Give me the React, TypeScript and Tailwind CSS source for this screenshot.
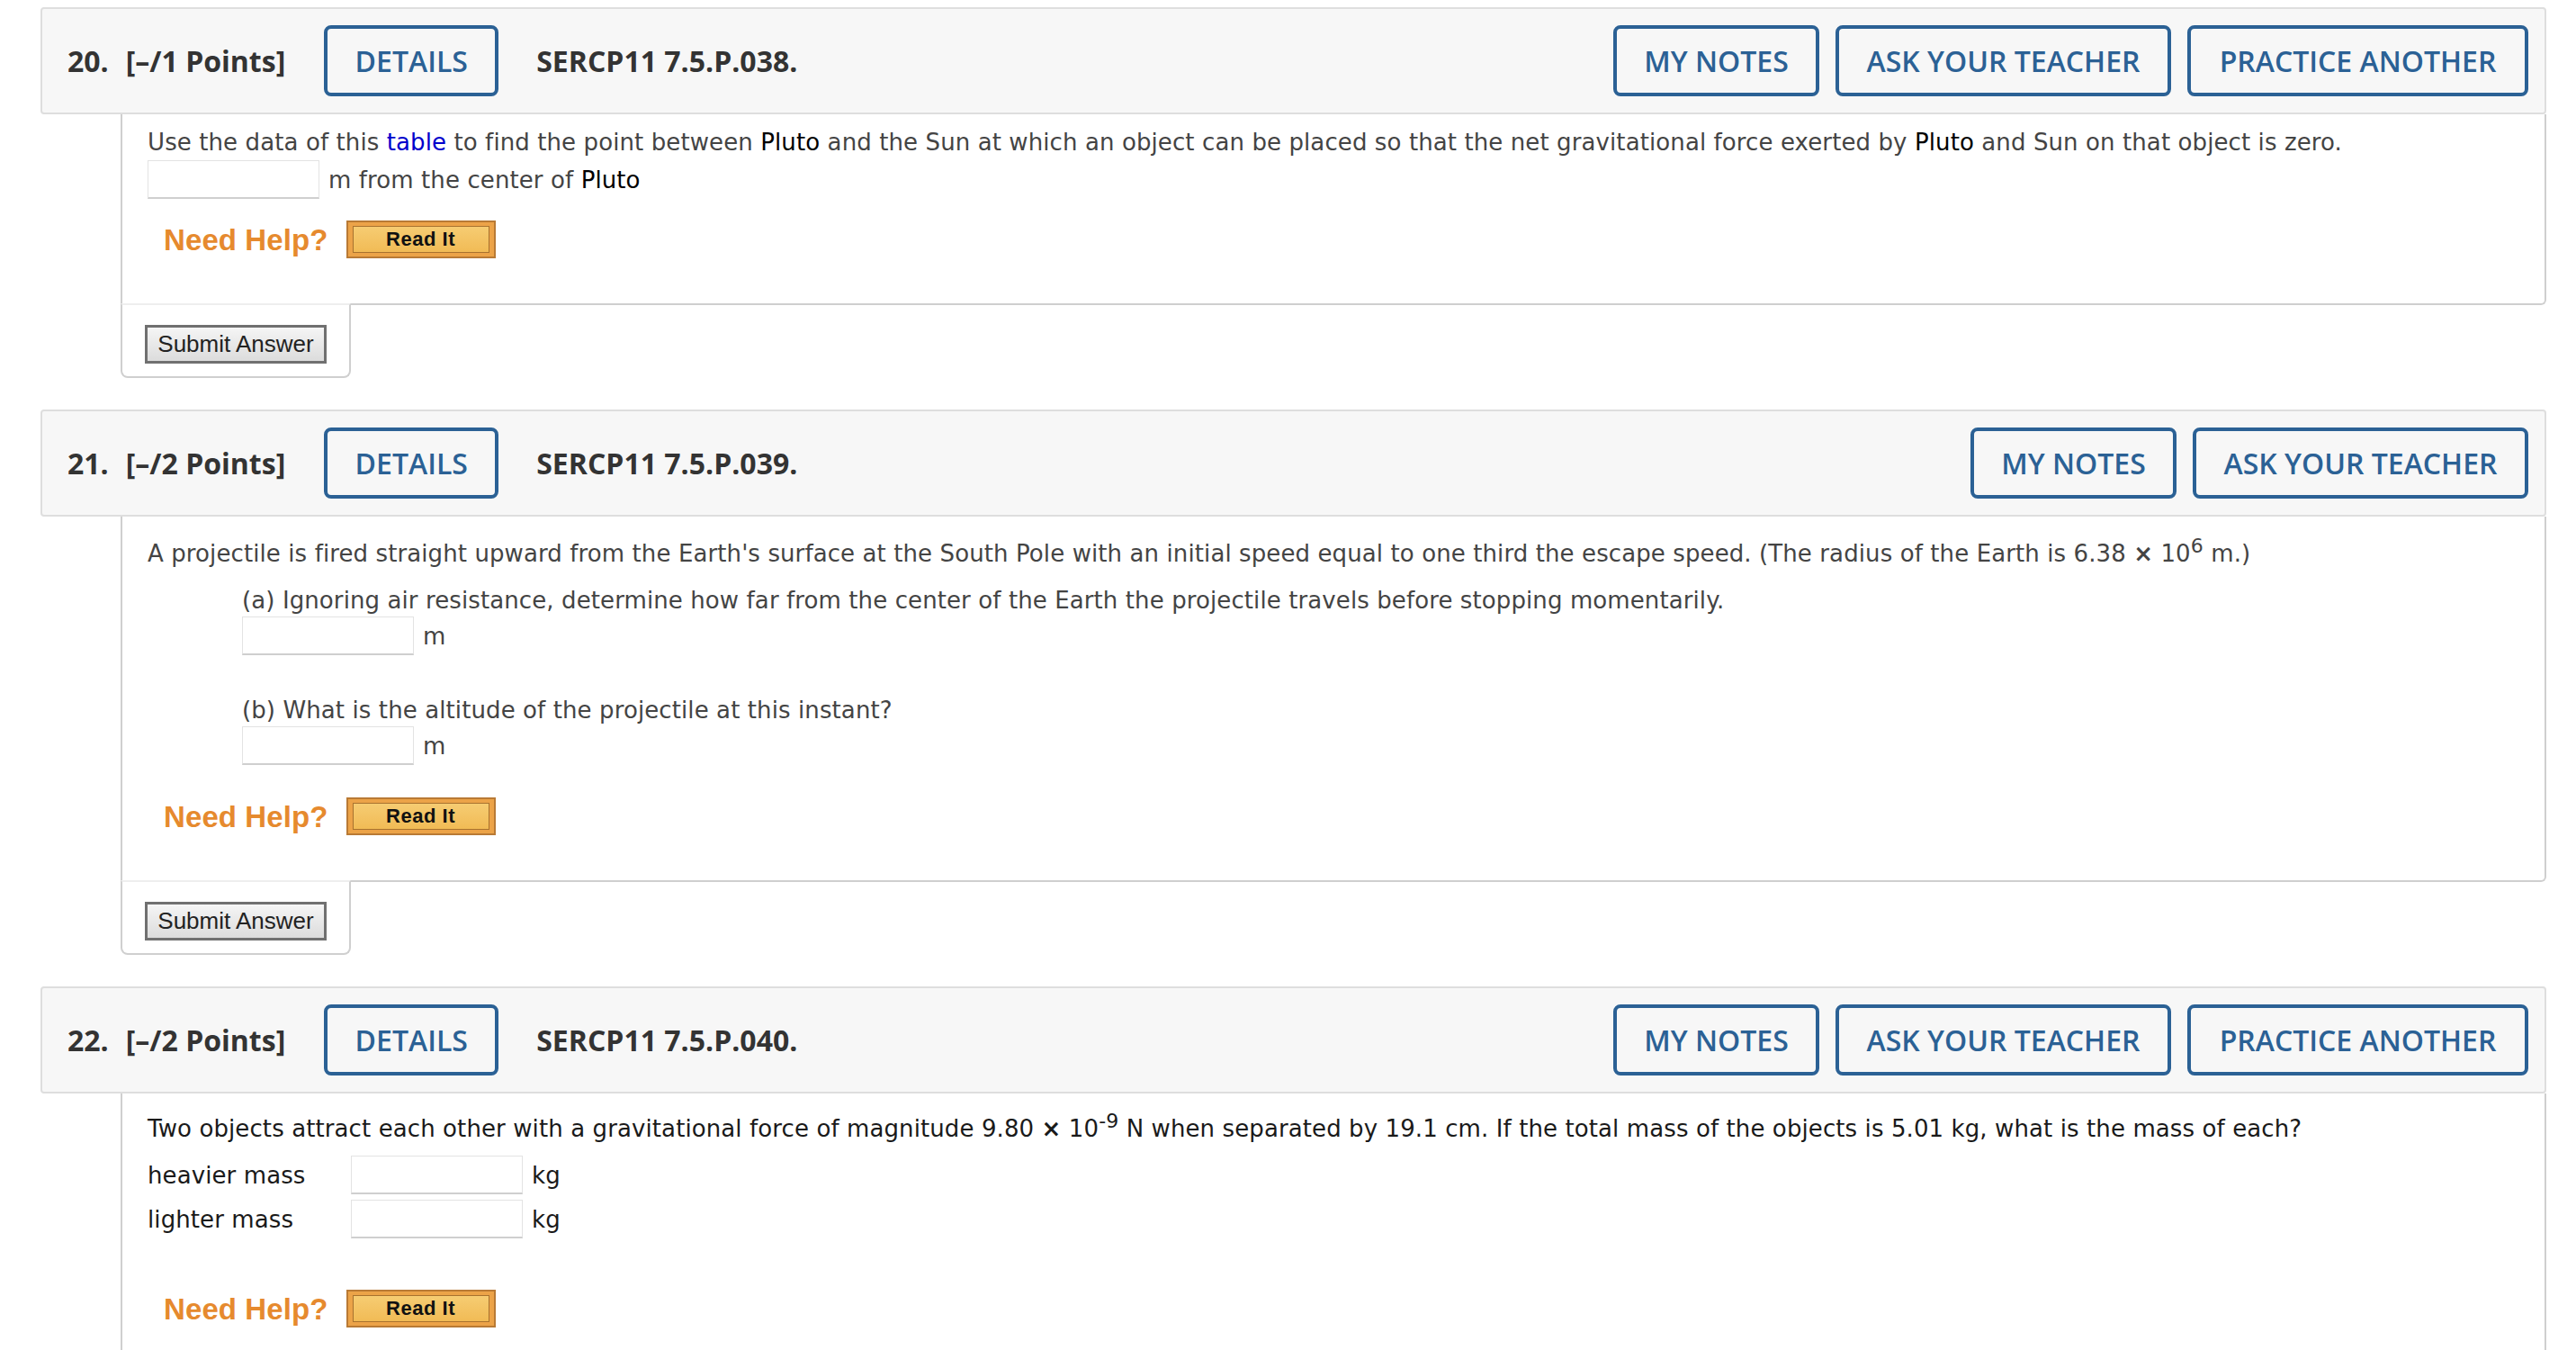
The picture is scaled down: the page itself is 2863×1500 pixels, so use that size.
import React from "react";

type HeaderProps = {
  num: string;
  points: string;
  code: string;
  practice?: boolean;
};

function OutlineButton({ label, width }: { label: string; width: string }) {
  return (
    <div
      className={`${width} h-[79px] flex items-center justify-center border-[4px] border-[#2b6195] rounded-[8px] text-[#2b6195] text-[32px] font-semibold`}
    >
      {label}
    </div>
  );
}

function QuestionHeader({ num, points, code, practice = true }: HeaderProps) {
  return (
    <div className="h-[119px] flex items-center bg-[#f7f7f7] border-2 border-[#dedede] rounded-[4px] pl-[28px] pr-[18px] font-['Open_Sans',sans-serif] text-[#333333]">
      <span className="text-[32px] font-bold">{num}</span>
      <span className="ml-[19px] text-[32px] font-bold">{points}</span>
      <div className="ml-[43px]">
        <OutlineButton label="DETAILS" width="w-[194px]" />
      </div>
      <span className="ml-[42px] text-[32px] font-bold">{code}</span>
      <div className="ml-auto flex items-center gap-[18px]">
        <OutlineButton label="MY NOTES" width="w-[229px]" />
        <OutlineButton label="ASK YOUR TEACHER" width="w-[373px]" />
        {practice && <OutlineButton label="PRACTICE ANOTHER" width="w-[379px]" />}
      </div>
    </div>
  );
}

function AnswerInput() {
  return (
    <div className="w-[191px] h-[43px] bg-white border border-[#e3e3e3] border-b-2 border-b-[#cfcfcf]" />
  );
}

function NeedHelp({ mt }: { mt: string }) {
  return (
    <div className={`${mt} flex items-center pl-[18px]`}>
      <span className="text-[33px] font-bold text-[#e68a2e] font-['Liberation_Sans',Arial,sans-serif] leading-none">
        Need Help?
      </span>
      <div className="ml-[20px] w-[166px] h-[42px] border-2 border-[#b97a35] bg-[#eca348] px-[5px] py-[4px]">
        <div className="h-full flex items-center justify-center border border-[#a8722f] bg-gradient-to-b from-[#f6cc72] to-[#f1bb55] text-[22px] font-bold text-[#111111] font-['Liberation_Sans',Arial,sans-serif] tracking-[0.5px]">
          Read It
        </div>
      </div>
    </div>
  );
}

function SubmitBox() {
  return (
    <div className="ml-[89px] -mt-[2px] w-[256px] border-2 border-[#cfcfcf] border-t-[#eeeeee] rounded-b-[8px] pt-[22px] pb-[14px] pl-[25px]">
      <div className="w-[202px] h-[43px] flex items-center justify-center border-[3px] border-[#707070] bg-gradient-to-b from-[#f5f5f5] to-[#dcdcdc] text-[26px] text-[#222222] font-['Liberation_Sans',Arial,sans-serif]">
        Submit Answer
      </div>
    </div>
  );
}

function Body({ pt, children }: { pt: string; children: React.ReactNode }) {
  return (
    <div
      className={`ml-[89px] border-2 border-t-0 border-[#cfcfcf] rounded-br-[6px] ${pt} pb-[50px] pl-[28px] text-[26px] leading-[36px] tracking-[0.1px] font-['DejaVu_Sans',Verdana,sans-serif] text-[#444444]`}
    >
      {children}
    </div>
  );
}

export default function App() {
  return (
    <div className="min-h-screen bg-white pt-[8px] pl-[45px] pb-[60px]">
      <div className="w-[2785px]">
        {/* 20 */}
        <div>
          <QuestionHeader num="20." points="[–/1 Points]" code="SERCP11 7.5.P.038." />
          <Body pt="pt-[13px]">
            <p>
              Use the data of this <span className="text-[#0000cc]">table</span> to find the point between{" "}
              <span className="text-black">Pluto</span> and the Sun at which an object can be placed so that the net
              gravitational force exerted by <span className="text-black">Pluto</span> and Sun on that object is zero.
            </p>
            <div className="mt-[2px] flex items-center">
              <AnswerInput />
              <span className="ml-[10px]">
                m from the center of <span className="text-black">Pluto</span>
              </span>
            </div>
            <NeedHelp mt="mt-[24px]" />
          </Body>
          <SubmitBox />
        </div>

        {/* 21 */}
        <div className="mt-[35px]">
          <QuestionHeader num="21." points="[–/2 Points]" code="SERCP11 7.5.P.039." practice={false} />
          <Body pt="pt-[22px]">
            <p>
              A projectile is fired straight upward from the Earth's surface at the South Pole with an initial speed equal
              to one third the escape speed. (The radius of the Earth is 6.38 <span className="font-bold">×</span> 10
              <span className="align-[10px] text-[22px] leading-none">6</span> m.)
            </p>
            <div className="ml-[105px]">
              <p className="mt-[16px]">(a) Ignoring air resistance, determine how far from the center of the Earth the projectile travels before stopping momentarily.</p>
              <div className="flex items-center">
                <AnswerInput />
                <span className="ml-[10px]">m</span>
              </div>
              <p className="mt-[43px]">(b) What is the altitude of the projectile at this instant?</p>
              <div className="flex items-center">
                <AnswerInput />
                <span className="ml-[10px]">m</span>
              </div>
            </div>
            <NeedHelp mt="mt-[36px]" />
          </Body>
          <SubmitBox />
        </div>

        {/* 22 */}
        <div className="mt-[35px]">
          <QuestionHeader num="22." points="[–/2 Points]" code="SERCP11 7.5.P.040." />
          <Body pt="pt-[20px]">
            <p className="text-[#1a1a1a]">
              Two objects attract each other with a gravitational force of magnitude 9.80{" "}
              <span className="font-bold">×</span> 10
              <span className="align-[10px] text-[22px] leading-none">-9</span> N when separated by 19.1 cm. If the total
              mass of the objects is 5.01 kg, what is the mass of each?
            </p>
            <div className="mt-[12px] flex items-center text-[#1a1a1a]">
              <span className="w-[226px]">heavier mass</span>
              <AnswerInput />
              <span className="ml-[10px]">kg</span>
            </div>
            <div className="mt-[6px] flex items-center text-[#1a1a1a]">
              <span className="w-[226px]">lighter mass</span>
              <AnswerInput />
              <span className="ml-[10px]">kg</span>
            </div>
            <NeedHelp mt="mt-[57px]" />
          </Body>
          <SubmitBox />
        </div>
      </div>
    </div>
  );
}
